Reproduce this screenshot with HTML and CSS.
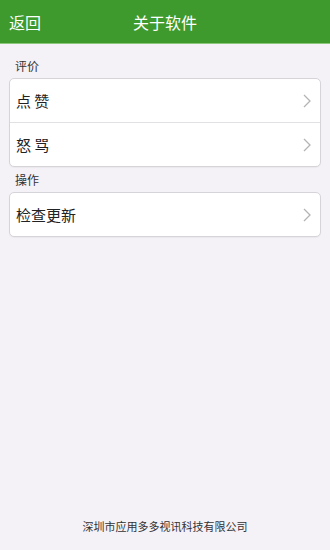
FILE: index.html
```html
<!DOCTYPE html>
<html>
<head>
<meta charset="utf-8">
<link rel="stylesheet" href="styles.css">
</head>
<body>
<div class="page">
  <header class="topbar">
    <span class="back">返回</span>
    <span class="title">关于软件</span>
  </header>
  <main class="content">
    <div class="section-label">评价</div>
    <div class="card">
      <div class="row"><span>点 赞</span><svg class="chev" viewBox="0 0 8 14"><path d="M1 1l6 6-6 6" fill="none" stroke="#b4b4b4" stroke-width="1.3"/></svg></div>
      <div class="row"><span>怒 骂</span><svg class="chev" viewBox="0 0 8 14"><path d="M1 1l6 6-6 6" fill="none" stroke="#b4b4b4" stroke-width="1.3"/></svg></div>
    </div>
    <div class="section-label">操作</div>
    <div class="card">
      <div class="row"><span>检查更新</span><svg class="chev" viewBox="0 0 8 14"><path d="M1 1l6 6-6 6" fill="none" stroke="#b4b4b4" stroke-width="1.3"/></svg></div>
    </div>
  </main>
  <footer class="footer">深圳市应用多多视讯科技有限公司</footer>
</div>
</body>
</html>
```
FILE: styles.css
```css
html, body {
  margin: 0;
  padding: 0;
}
body {
  font-family: "Noto Sans CJK SC", "Noto Sans", sans-serif;
  background: #f4f1f7;
}
.page {
  width: 330px;
  height: 550px;
  display: flex;
  flex-direction: column;
  background: #f4f1f7;
}
.topbar {
  height: 43px;
  background: #3e9a2c;
  border-bottom: 1px solid #8cc87c;
  display: flex;
  align-items: center;
  position: relative;
  color: #fff;
  font-size: 16px;
}
.back {
  padding-left: 9px;
}
.title {
  position: absolute;
  left: 0;
  right: 0;
  text-align: center;
  pointer-events: none;
}
.content {
  flex: 1;
  padding: 13px 9px 0 9px;
}
.section-label {
  font-size: 12px;
  color: #333;
  padding-left: 6px;
  line-height: 18px;
  margin-bottom: 3px;
}
.card {
  background: #fff;
  border: 1px solid #d6d4d8;
  border-radius: 5px;
  margin-bottom: 4px;
  box-shadow: 0 1px 1px rgba(0, 0, 0, 0.04);
}
.row {
  height: 43px;
  display: flex;
  align-items: center;
  justify-content: space-between;
  padding: 0 9px 0 6px;
  font-size: 15px;
  color: #222;
}
.row + .row {
  border-top: 1px solid #e2e0e4;
}
.chev {
  width: 8px;
  height: 14px;
}
.footer {
  text-align: center;
  font-size: 11px;
  color: #333;
  padding-bottom: 16px;
}
```
